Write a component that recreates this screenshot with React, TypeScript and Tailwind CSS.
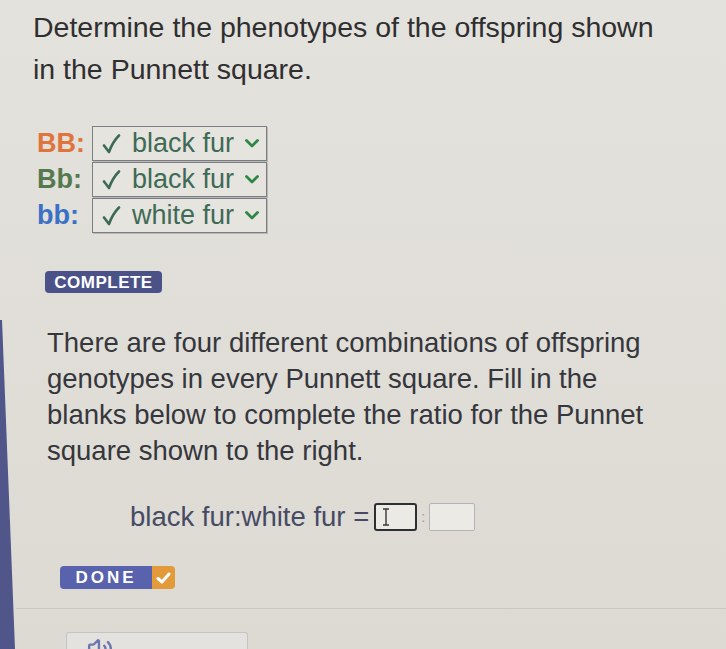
import React from 'react';
import { Volume2 } from 'lucide-react';

type Row = { genotype: string; color: string; phenotype: string };

const rows: Row[] = [
    { genotype: 'BB', color: 'text-[#df743c]', phenotype: 'black fur' },
    { genotype: 'Bb', color: 'text-[#55794f]', phenotype: 'black fur' },
    { genotype: 'bb', color: 'text-[#3a70c6]', phenotype: 'white fur' },
];

const Chevron: React.FC = () => (
    <svg width="14" height="9" viewBox="0 0 14 9" className="shrink-0">
        <polyline points="1.5,1.5 7,7 12.5,1.5" fill="none" stroke="#2e8745" strokeWidth="2.8" strokeLinecap="round" strokeLinejoin="round" />
    </svg>
);

const Tick: React.FC = () => (
    <svg width="20" height="20" viewBox="0 0 20 20" className="shrink-0">
        <path d="M3 11.5 L8 18 C10.5 11 13.5 6 18 1.5" fill="none" stroke="#3d6a52" strokeWidth="2.6" strokeLinecap="round" strokeLinejoin="round" />
    </svg>
);

const PhenotypeSelect: React.FC<{ row: Row }> = ({ row }) => (
    <div className="flex items-center">
        <span className={`w-[55px] text-[27px] font-bold leading-none ${row.color}`}>{row.genotype}:</span>
        <div className="flex items-center w-[175px] h-[35px] pl-[8px] pr-[7px] border border-[#7c7e86] shadow-[1px_1px_0_#b9b8b3] bg-[#e6e4de]">
            <Tick />
            <span className="ml-[11px] flex-1 text-[27px] leading-none text-[#3f6a56] whitespace-nowrap">{row.phenotype}</span>
            <Chevron />
        </div>
    </div>
);

const App: React.FC = () => {
    return (
        <div className="w-[726px] h-[649px] overflow-hidden flex bg-linear-to-b from-[#e4e2dc] to-[#dcdad3] font-['Liberation_Sans',Arial,sans-serif]">
            {/* screen edge on the left */}
            <div className="w-[16px] shrink-0 bg-[#50568a] [clip-path:polygon(0_320px,2px_320px,15px_100%,0_100%)]" />

            <div className="flex-1 flex flex-col overflow-hidden">
                <h1 className="shrink-0 ml-[17px] mt-[6px] text-[28.5px] leading-[42px] text-[#2f2f31] font-normal">
                    Determine the phenotypes of the offspring shown
                    <br />
                    in the Punnett square.
                </h1>

                <div className="shrink-0 ml-[21px] mt-[36px] flex flex-col gap-[1px]">
                    {rows.map((row) => (
                        <PhenotypeSelect key={row.genotype} row={row} />
                    ))}
                </div>

                <div className="shrink-0 ml-[29px] mt-[38px] w-[117px] h-[22px] rounded-[4px] bg-[#4b5287] flex items-center justify-center">
                    <span className="text-[17px] font-bold text-white tracking-[0.5px] leading-none">COMPLETE</span>
                </div>

                <p className="shrink-0 ml-[31px] mt-[32px] w-[612px] text-[27.5px] leading-[36px] text-[#36363d]">
                    There are four different combinations of offspring genotypes in every Punnett square. Fill in the blanks below to complete the ratio for the Punnet square shown to the right.
                </p>

                <div className="shrink-0 ml-[114px] mt-[34px] flex items-center h-[28px]">
                    <span className="text-[27.5px] leading-none text-[#474a63] whitespace-nowrap">black fur:white fur =</span>
                    <div className="ml-[5px] w-[43px] h-[28px] rounded-[3px] border-2 border-[#2e2f33] bg-[#eceae5] flex items-center pl-[5px]">
                        <svg width="10" height="18" viewBox="0 0 10 18">
                            <path d="M2 1 H8 M5 1 V17 M2 17 H8" stroke="#3a3a3a" strokeWidth="1.4" fill="none" />
                        </svg>
                    </div>
                    <span className="mx-[4px] text-[14px] text-[#9a9aa2] leading-none">:</span>
                    <div className="w-[46px] h-[28px] rounded-[2px] border border-[#b4b4b8] bg-[#eceae5]" />
                </div>

                <div className="shrink-0 ml-[44px] mt-[35px] flex h-[23px] w-[115px] rounded-[4px] overflow-hidden">
                    <div className="flex-1 bg-[#5962ac] flex items-center justify-center">
                        <span className="text-[17px] font-bold text-white tracking-[3px] leading-none">DONE</span>
                    </div>
                    <div className="w-[23px] bg-[#e39a3a] flex items-center justify-center">
                        <svg width="15" height="12" viewBox="0 0 15 12">
                            <path d="M2 6.5 L6 10 L13 2" stroke="#fff" strokeWidth="3" fill="none" strokeLinecap="round" strokeLinejoin="round" />
                        </svg>
                    </div>
                </div>

                <div className="shrink-0 mt-[19px] h-[1px] bg-[#c9c7c0]" />

                {/* audio button, mostly below the fold */}
                <div className="shrink-0 ml-[50px] mt-[23px] w-[182px] h-[40px] border border-b-0 border-[#c3c3c8] rounded-t-[3px] bg-[#e3e2de] flex items-start pl-[20px] pt-[3px]">
                    <Volume2 size={26} color="#6b78b0" strokeWidth={2.2} />
                </div>
            </div>
        </div>
    );
};

export default App;
